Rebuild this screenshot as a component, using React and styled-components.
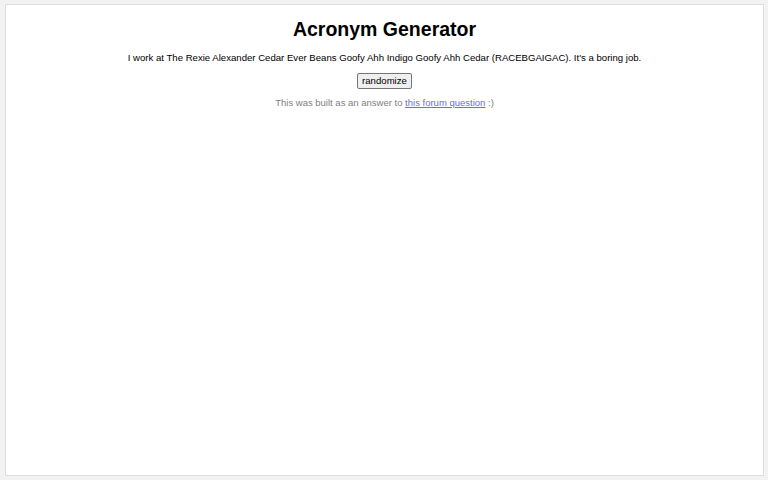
import styled, { createGlobalStyle } from 'styled-components'

const GlobalStyle = createGlobalStyle`
	html, body {
		margin: 0;
		padding: 0;
		background: #f2f2f2;
	}
	body {
		font-family: "Liberation Sans", Arial, sans-serif;
	}
`

const Page = styled.div`
	box-sizing: border-box;
	height: 480px;
	padding: 4px 4px 4px 5px;
`

const Card = styled.main`
	box-sizing: border-box;
	height: 472px;
	display: flex;
	flex-direction: column;
	align-items: center;
	padding-top: 13px;
	background: #fff;
	border: 1px solid #dcdcdc;
`

const Title = styled.h1`
	margin: 0;
	font-size: 19.5px;
	line-height: 22px;
	font-weight: bold;
	color: #000;
`

const Sentence = styled.p`
	margin: 11px 0 0;
	font-size: 9.6px;
	line-height: 14px;
	color: #000;
`

const Button = styled.button`
	margin-top: 8px;
	padding: 1px 4px;
	font-family: "Liberation Sans", Arial, sans-serif;
	font-size: 9.6px;
	line-height: 12px;
	color: #000;
	background: #efefef;
	border: 1px solid #767676;
	border-radius: 2px;
`

const Note = styled.p`
	margin: 7px 0 0;
	font-size: 9.5px;
	line-height: 14px;
	color: #808080;

	& a {
		color: #6d6ddc;
	}
`

export default function App() {
	return (
		<>
			<GlobalStyle />
			<Page>
				<Card>
					<Title>Acronym Generator</Title>
					<Sentence>
						I work at The Rexie Alexander Cedar Ever Beans Goofy Ahh Indigo Goofy Ahh Cedar
						(RACEBGAIGAC). It's a boring job.
					</Sentence>
					<Button>randomize</Button>
					<Note>
						This was built as an answer to <a href="#">this forum question</a> :)
					</Note>
				</Card>
			</Page>
		</>
	)
}
